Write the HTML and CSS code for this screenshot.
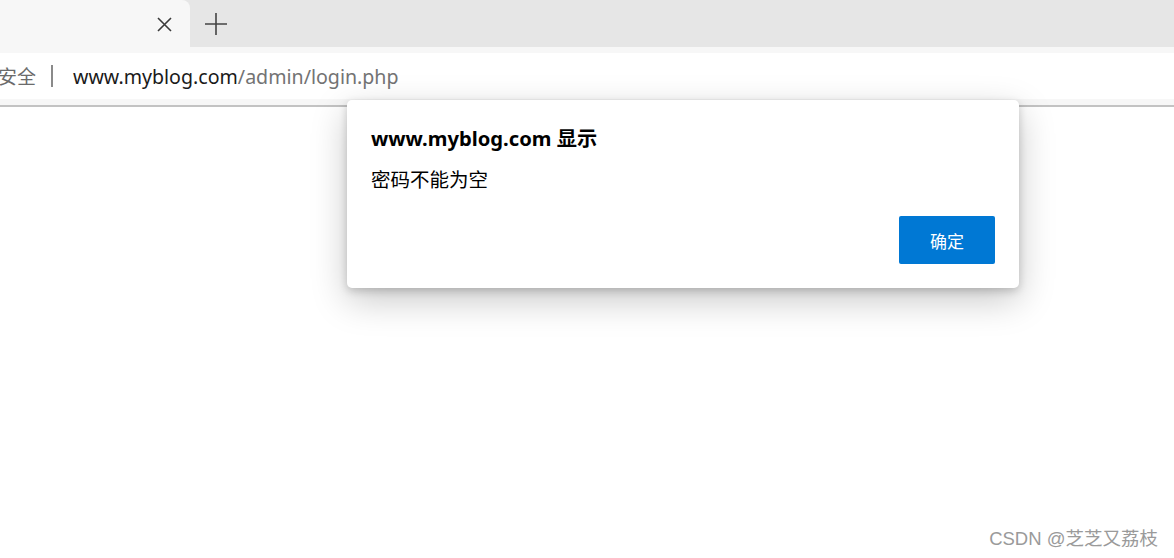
FILE: index.html
```html
<!DOCTYPE html>
<html lang="zh-CN">
<head>
<meta charset="utf-8">
<title>login</title>
<link rel="stylesheet" href="styles.css">
</head>
<body>
<header class="chrome">
  <div class="tabbar">
    <div class="tab">
      <svg class="tab-close" width="15" height="15" viewBox="0 0 15 15"><path d="M1 1 L14 14 M14 1 L1 14" stroke="#3a3a3a" stroke-width="1.6" fill="none"/></svg>
    </div>
    <svg class="newtab" width="22" height="22" viewBox="0 0 22 22"><path d="M11 0 V22 M0 11 H22" stroke="#444" stroke-width="1.6" fill="none"/></svg>
  </div>
  <div class="toolbar">
    <div class="omnibox">
      <span class="secure">安全</span>
      <span class="sep"></span>
      <span class="url"><span class="host">www.myblog.com</span><span class="path">/admin/login.php</span></span>
    </div>
  </div>
</header>
<main class="page"></main>

<div class="dialog">
  <div class="dialog-title">www.myblog.com 显示</div>
  <div class="dialog-msg">密码不能为空</div>
  <div class="dialog-actions"><button class="ok">确定</button></div>
</div>

<div class="watermark">CSDN @芝芝又荔枝</div>
</body>
</html>
```

FILE: styles.css
```css
html, body {
  margin: 0;
  padding: 0;
  background: #ffffff;
  width: 1174px;
  height: 558px;
  overflow: hidden;
  font-family: "Noto Sans", "Noto Sans CJK SC", sans-serif;
}

.chrome {
  display: flex;
  flex-direction: column;
}

.tabbar {
  height: 47px;
  background: #e6e6e6;
  display: flex;
  align-items: stretch;
}

.tab {
  width: 190px;
  background: #f7f7f7;
  border-top-right-radius: 8px;
  display: flex;
  align-items: center;
  justify-content: flex-end;
  padding-right: 18px;
  box-sizing: border-box;
}

.tab-close {
  display: block;
  margin-top: 1px;
}

.newtab {
  display: block;
  margin-left: 15px;
  margin-top: 13px;
}

.toolbar {
  background: #f7f7f7;
  padding: 6px 0 6px 0;
  border-bottom: 2px solid #c3c3c3;
}

.omnibox {
  height: 46px;
  background: #ffffff;
  display: flex;
  align-items: center;
  font-size: 19.6px;
}

.secure {
  color: #6b6b6b;
  margin-left: -2px;
  font-size: 19px;
}

.sep {
  width: 2px;
  height: 22px;
  background: #8a8a8a;
  margin-left: 15px;
  margin-right: 20px;
}

.host {
  color: #1a1a1a;
}

.path {
  color: #737373;
}

.page {
  height: 400px;
}

.dialog {
  position: absolute;
  left: 347px;
  top: 100px;
  width: 672px;
  height: 188px;
  box-sizing: border-box;
  background: #ffffff;
  border-radius: 5px;
  box-shadow: 0 12px 36px rgba(0, 0, 0, 0.22), 0 3px 8px rgba(0, 0, 0, 0.18);
  padding: 24px 24px 0 24px;
  display: flex;
  flex-direction: column;
}

.dialog-title {
  font-size: 20.2px;
  font-weight: 700;
  color: #000;
  line-height: 28px;
}

.dialog-msg {
  font-size: 19.5px;
  color: #000;
  line-height: 28px;
  margin-top: 14px;
}

.dialog-actions {
  display: flex;
  justify-content: flex-end;
  margin-top: 22px;
}

.ok {
  width: 96px;
  height: 48px;
  background: #0078d4;
  color: #ffffff;
  border: none;
  border-radius: 2px;
  font-family: "Noto Sans CJK SC", sans-serif;
  font-size: 17px;
  padding: 0;
}

.watermark {
  position: absolute;
  right: 16px;
  bottom: 8px;
  font-size: 18.5px;
  color: #9a9a9a;
  text-shadow: 0 0 1px #fff;
  font-family: "Liberation Sans", "Noto Sans CJK SC", sans-serif;
}
```
